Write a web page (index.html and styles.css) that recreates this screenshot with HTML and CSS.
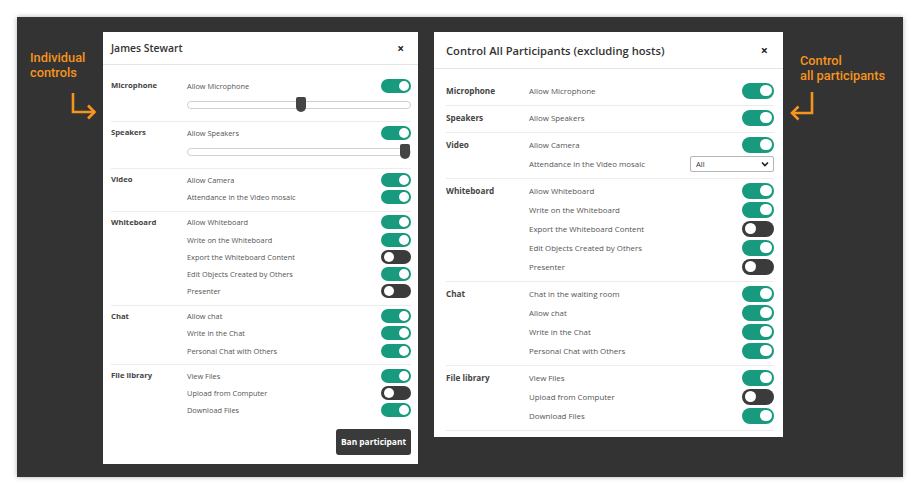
FILE: index.html
```html
<!DOCTYPE html>
<html>
<head>
<meta charset="utf-8">
<link rel="stylesheet" href="styles.css">
</head>
<body>
<div class="stage">
  <div class="note note-left">
    <div class="note-text">Individual<br>controls</div>
    <svg class="arrow" width="86" height="40" viewBox="0 0 86 40">
      <path d="M56 5 V24 H77" fill="none" stroke="#f7941d" stroke-width="2.6"/>
      <path d="M71 17.5 L77.5 24 L71 30.5" fill="none" stroke="#f7941d" stroke-width="2.6"/>
    </svg>
  </div>

  <div class="panel panel-left">
    <div class="panel-head"><span class="title">James Stewart</span><span class="close">×</span></div>
    <div class="panel-body">
      <div class="section">
        <div class="sec-label">Microphone</div>
        <div class="items">
          <div class="item"><span>Allow Microphone</span><span class="toggle on"></span></div>
          <div class="slider-row"><div class="track"><div class="thumb" style="left:48.5%"></div></div></div>
        </div>
      </div>
      <div class="section">
        <div class="sec-label">Speakers</div>
        <div class="items">
          <div class="item"><span>Allow Speakers</span><span class="toggle on"></span></div>
          <div class="slider-row"><div class="track"><div class="thumb" style="left:95.5%"></div></div></div>
        </div>
      </div>
      <div class="section">
        <div class="sec-label">Video</div>
        <div class="items">
          <div class="item"><span>Allow Camera</span><span class="toggle on"></span></div>
          <div class="item"><span>Attendance in the Video mosaic</span><span class="toggle on"></span></div>
        </div>
      </div>
      <div class="section">
        <div class="sec-label">Whiteboard</div>
        <div class="items">
          <div class="item"><span>Allow Whiteboard</span><span class="toggle on"></span></div>
          <div class="item"><span>Write on the Whiteboard</span><span class="toggle on"></span></div>
          <div class="item"><span>Export the Whiteboard Content</span><span class="toggle"></span></div>
          <div class="item"><span>Edit Objects Created by Others</span><span class="toggle on"></span></div>
          <div class="item"><span>Presenter</span><span class="toggle"></span></div>
        </div>
      </div>
      <div class="section">
        <div class="sec-label">Chat</div>
        <div class="items">
          <div class="item"><span>Allow chat</span><span class="toggle on"></span></div>
          <div class="item"><span>Write in the Chat</span><span class="toggle on"></span></div>
          <div class="item"><span>Personal Chat with Others</span><span class="toggle on"></span></div>
        </div>
      </div>
      <div class="section last">
        <div class="sec-label">File library</div>
        <div class="items">
          <div class="item"><span>View Files</span><span class="toggle on"></span></div>
          <div class="item"><span>Upload from Computer</span><span class="toggle"></span></div>
          <div class="item"><span>Download Files</span><span class="toggle on"></span></div>
        </div>
      </div>
    </div>
    <div class="actions"><button class="ban">Ban participant</button></div>
  </div>

  <div class="panel panel-right">
    <div class="panel-head"><span class="title">Control All Participants (excluding hosts)</span><span class="close">×</span></div>
    <div class="panel-body">
      <div class="section">
        <div class="sec-label">Microphone</div>
        <div class="items">
          <div class="item"><span>Allow Microphone</span><span class="toggle on"></span></div>
        </div>
      </div>
      <div class="section">
        <div class="sec-label">Speakers</div>
        <div class="items">
          <div class="item"><span>Allow Speakers</span><span class="toggle on"></span></div>
        </div>
      </div>
      <div class="section">
        <div class="sec-label">Video</div>
        <div class="items">
          <div class="item"><span>Allow Camera</span><span class="toggle on"></span></div>
          <div class="item"><span>Attendance in the Video mosaic</span>
            <span class="select"><span>All</span>
              <svg width="8" height="6" viewBox="0 0 8 6"><path d="M1 1.5 L4 4.5 L7 1.5" fill="none" stroke="#222" stroke-width="1.6"/></svg>
            </span>
          </div>
        </div>
      </div>
      <div class="section">
        <div class="sec-label">Whiteboard</div>
        <div class="items">
          <div class="item"><span>Allow Whiteboard</span><span class="toggle on"></span></div>
          <div class="item"><span>Write on the Whiteboard</span><span class="toggle on"></span></div>
          <div class="item"><span>Export the Whiteboard Content</span><span class="toggle"></span></div>
          <div class="item"><span>Edit Objects Created by Others</span><span class="toggle on"></span></div>
          <div class="item"><span>Presenter</span><span class="toggle"></span></div>
        </div>
      </div>
      <div class="section">
        <div class="sec-label">Chat</div>
        <div class="items">
          <div class="item"><span>Chat in the waiting room</span><span class="toggle on"></span></div>
          <div class="item"><span>Allow chat</span><span class="toggle on"></span></div>
          <div class="item"><span>Write in the Chat</span><span class="toggle on"></span></div>
          <div class="item"><span>Personal Chat with Others</span><span class="toggle on"></span></div>
        </div>
      </div>
      <div class="section">
        <div class="sec-label">File library</div>
        <div class="items">
          <div class="item"><span>View Files</span><span class="toggle on"></span></div>
          <div class="item"><span>Upload from Computer</span><span class="toggle"></span></div>
          <div class="item"><span>Download Files</span><span class="toggle on"></span></div>
        </div>
      </div>
    </div>
  </div>

  <div class="note note-right">
    <div class="note-text">Control<br>all participants</div>
    <svg class="arrow" width="60" height="40" viewBox="0 0 60 40">
      <path d="M29 4 V25 H9" fill="none" stroke="#f7941d" stroke-width="2.6"/>
      <path d="M15.5 18.5 L9 25 L15.5 31.5" fill="none" stroke="#f7941d" stroke-width="2.6"/>
    </svg>
  </div>
</div>
</body>
</html>
```

FILE: styles.css
```css
* { box-sizing: border-box; }
html, body { margin: 0; padding: 0; background: #ffffff; }
body { width: 920px; height: 495px; overflow: hidden; font-family: "Open Sans", "Noto Sans", sans-serif; }

.stage {
  margin: 17px 0 0 17px;
  width: 886px;
  height: 460px;
  background: #333333;
  box-shadow: 0 0 5px rgba(0,0,0,0.3);
  display: flex;
  align-items: flex-start;
  padding-top: 15px;
}

.note { display: flex; flex-direction: column; }
.note-text {
  font-family: Roboto, "Liberation Sans", sans-serif;
  font-weight: 500;
  font-size: 12.8px;
  line-height: 15px;
  color: #f7941d;
}
.note-left { width: 86px; padding-left: 13px; padding-top: 18px; }
.note-left .arrow { margin-left: -13px; margin-top: 8px; display: block; }
.note-right { padding-left: 17px; padding-top: 21px; }
.note-right .arrow { margin-left: -17px; margin-top: 5px; display: block; }

.panel { background: #ffffff; display: flex; flex-direction: column; color: #555; }
.panel-left { width: 315px; height: 432px; margin-right: 16px; }
.panel-right { width: 349px; height: 405px; }

.panel-head {
  display: flex;
  align-items: center;
  justify-content: space-between;
  border-bottom: 1px solid #e4e4e4;
}
.title { font-weight: 600; color: #333; }
.close { font-weight: 700; color: #222; }
.panel-left .panel-head { height: 33px; padding: 0 14px 0 8px; }
.panel-left .title { font-size: 10.4px; }
.panel-left .close { font-size: 12px; }
.panel-right .panel-head { height: 37px; padding: 0 15px 0 12px; }
.panel-right .title { font-size: 11.2px; }
.panel-right .close { font-size: 12.5px; }

.panel-body { display: flex; flex-direction: column; }
.panel-left .panel-body { padding: 10px 7px 0 8px; }
.panel-right .panel-body { padding: 10px 9px 0 12px; }

.section {
  display: flex;
  align-items: flex-start;
  padding: 2px 0 5px;
  border-bottom: 1px solid #ececec;
}
.section.last { border-bottom: none; }
.sec-label { font-weight: 700; color: #444; flex: none; }
.items { flex: 1; display: flex; flex-direction: column; }
.item { display: flex; align-items: center; justify-content: space-between; }

.panel-left .sec-label { width: 76px; font-size: 7.7px; line-height: 17.2px; }
.panel-left .item { height: 17.2px; font-size: 7.4px; }
.panel-right .sec-label { width: 83px; font-size: 8.2px; line-height: 19px; }
.panel-right .item { height: 19px; font-size: 7.9px; }

.toggle {
  display: flex;
  align-items: center;
  justify-content: flex-start;
  background: #3b3b3b;
  flex: none;
}
.toggle.on { background: #179a7d; justify-content: flex-end; }
.toggle::after { content: ""; display: block; background: #ffffff; border-radius: 50%; }
.panel-left .toggle { width: 30px; height: 14px; border-radius: 7px; padding: 0 2.5px; }
.panel-left .toggle::after { width: 10px; height: 10px; }
.panel-right .toggle { width: 32px; height: 16px; border-radius: 8px; padding: 0 2.5px; }
.panel-right .toggle::after { width: 11.5px; height: 11.5px; }

.slider-row { height: 22px; display: flex; align-items: center; }
.track {
  position: relative;
  width: 100%;
  height: 8px;
  border: 1px solid #cfcfcf;
  border-radius: 4px;
  background: #ffffff;
}
.thumb {
  position: absolute;
  top: -5px;
  width: 10px;
  height: 15px;
  background: #444444;
  border-radius: 2px 2px 5px 5px;
}

.select {
  width: 84px;
  height: 16px;
  border: 1px solid #b5b5b5;
  border-radius: 2px;
  display: flex;
  align-items: center;
  justify-content: space-between;
  padding: 0 4px 0 5px;
  font-size: 7.6px;
  color: #333;
  background: #fff;
}

.actions { display: flex; justify-content: flex-end; padding: 5px 7px 0 8px; }
.ban {
  font-family: "Open Sans", "Noto Sans", sans-serif;
  font-weight: 700;
  font-size: 8.4px;
  color: #ffffff;
  background: #3a3a3a;
  border: none;
  border-radius: 3px;
  width: 75px;
  height: 26px;
  padding: 0;
}
```
